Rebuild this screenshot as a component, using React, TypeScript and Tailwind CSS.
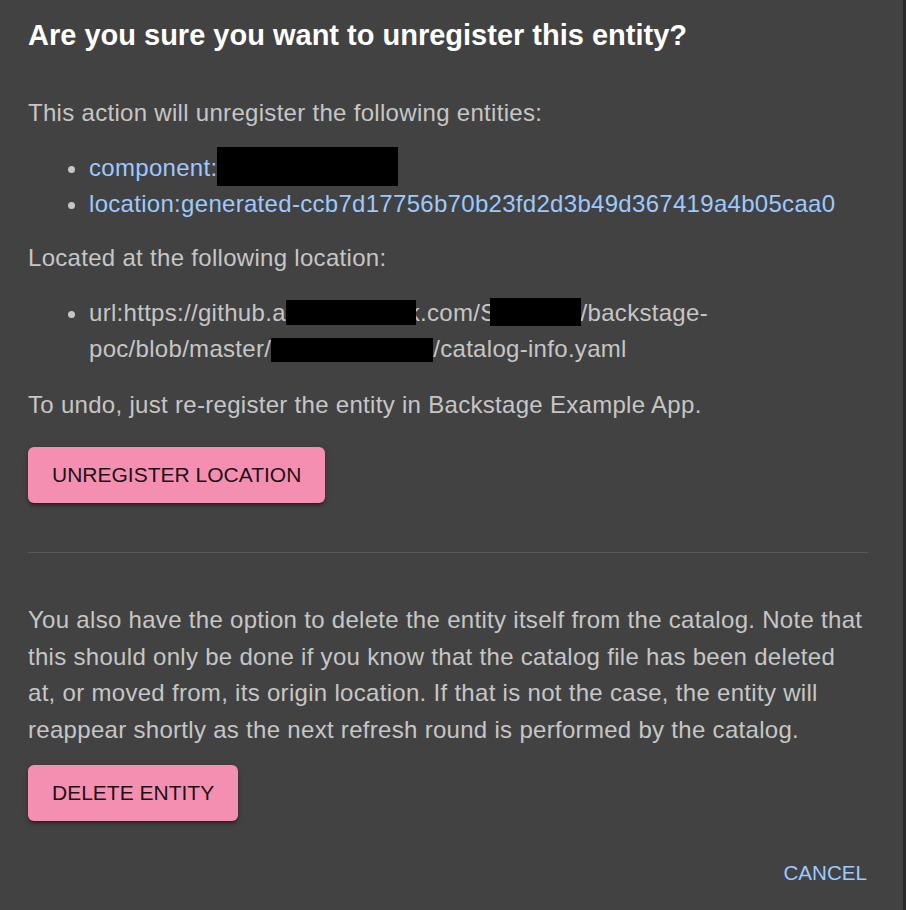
import React from 'react';

function Redacted({ w, h, top }: { w: string; h: string; top: string }) {
  return <span className={`relative z-10 inline-block bg-black align-top ${w} ${h} ${top}`} />;
}

function PinkButton({ children }: { children: React.ReactNode }) {
  return (
    <button className="flex h-[56px] items-center rounded-[6px] bg-[#f48fb1] px-6 text-[21px] uppercase leading-[36px] text-black/90 shadow-[0_4px_2px_-3px_rgba(0,0,0,0.3),0_3px_3px_0_rgba(0,0,0,0.2),0_1px_7px_0_rgba(0,0,0,0.15)]">
      {children}
    </button>
  );
}

export default function App() {
  return (
    <div className="flex min-h-[910px] bg-[#2a2a2a] font-['Liberation_Sans',Arial,sans-serif]">
      <div className="w-[903px] bg-[#424242] pl-[28px] pr-[35px] pt-[17px]">
        <h2 className="text-[29px] font-bold leading-[36px] text-white">
          Are you sure you want to unregister this entity?
        </h2>

        <div className="text-[24px] leading-[36px] tracking-[0.3px] text-[#c6c6c6]">
          <p className="mt-[42px]">This action will unregister the following entities:</p>
          <ul className="mt-[19px] list-disc pl-[61px]">
            <li>
              <span className="text-[#9cc9ff]">component:</span>
              <Redacted w="w-[181px]" h="h-[39px]" top="-mt-[3px]" />
            </li>
            <li>
              <span className="text-[#9cc9ff]">
                location:generated-ccb7d17756b70b23fd2d3b49d367419a4b05caa0
              </span>
            </li>
          </ul>

          <p className="mt-[18px]">Located at the following location:</p>
          <ul className="mt-[19px] list-disc pl-[61px]">
            <li>
              url:https://github.a
              <Redacted w="w-[130px] -mr-[8px]" h="h-[25px]" top="mt-[5px]" />
              k.com/S
              <Redacted w="w-[91px] -ml-[7px]" h="h-[28px]" top="mt-[3px]" />
              /backstage-
              <br />
              poc/blob/master/
              <Redacted w="w-[162px]" h="h-[24px]" top="mt-[7px]" />
              /catalog-info.yaml
            </li>
          </ul>

          <p className="mt-[20px]">To undo, just re-register the entity in Backstage Example App.</p>
        </div>

        <div className="mt-[24px]">
          <PinkButton>Unregister Location</PinkButton>
        </div>

        <div className="mt-[49px] h-px bg-[#595959]" />

        <p className="mt-[49px] text-[24px] leading-[36.5px] tracking-[0.3px] text-[#c6c6c6]">
          You also have the option to delete the entity itself from the catalog. Note that
          <br />
          this should only be done if you know that the catalog file has been deleted
          <br />
          at, or moved from, its origin location. If that is not the case, the entity will
          <br />
          reappear shortly as the next refresh round is performed by the catalog.
        </p>

        <div className="mt-[17px]">
          <PinkButton>Delete Entity</PinkButton>
        </div>

        <div className="mt-[34px] flex justify-end pr-px">
          <button className="text-[20.6px] uppercase leading-[36px] text-[#9cc9ff]">Cancel</button>
        </div>
      </div>
    </div>
  );
}
